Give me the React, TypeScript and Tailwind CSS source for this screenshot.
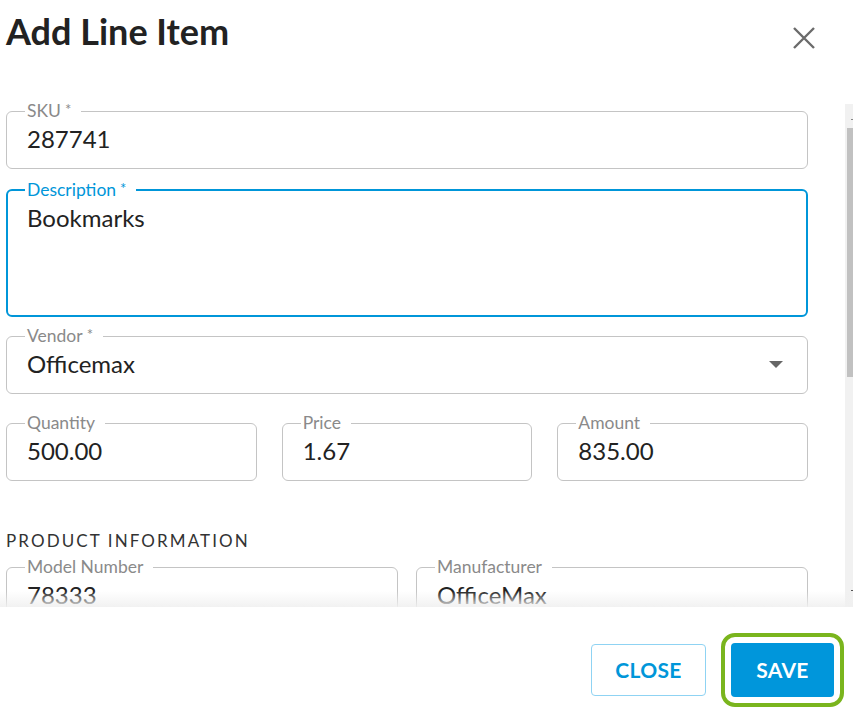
import React from "react";

const font = { fontFamily: "Lato, 'Noto Sans', sans-serif" };

function Field({
  label,
  value,
  required,
  focused,
  select,
  tall,
}: {
  label: string;
  value: string;
  required?: boolean;
  focused?: boolean;
  select?: boolean;
  tall?: boolean;
}) {
  return (
    <div
      className={`relative rounded-[6px] bg-white ${
        focused ? "border-2 border-[#0096d9]" : "border border-[#c4c4c4]"
      } ${tall ? "h-[128px]" : "h-[58px]"}`}
    >
      <span
        className={`absolute top-[-11px] flex items-start bg-white pl-[2px] pr-[10px] text-[17.5px] leading-[20px] ${
          focused ? "left-[17px] text-[#0096d9]" : "left-[18px] text-[#8a8a8a]"
        }`}
      >
        {label}
        {required && <span className="ml-[4px] mt-[1px] text-[15px] leading-[15px]">*</span>}
      </span>
      <div
        className={`flex text-[24px] text-[#222] ${
          tall ? "items-start px-[19px] pt-[9px]" : "h-full items-center px-[20px] pb-[2px]"
        }`}
      >
        <span className="flex-1">{value}</span>
        {select && (
          <svg width="14" height="7" viewBox="0 0 14 7" className="mr-[4px]">
            <path d="M0 0h14L7 7z" fill="#666" />
          </svg>
        )}
      </div>
    </div>
  );
}

export default function App() {
  return (
    <div className="h-[712px] w-[853px] overflow-hidden bg-white" style={font}>
      <div className="flex h-[98px] items-start justify-between">
        <h1 className="ml-[6px] mt-[9px] text-[36px] font-bold leading-[44px] text-[#222]">
          Add Line Item
        </h1>
        <button className="mr-[38px] mt-[27px] p-0">
          <svg width="22" height="22" viewBox="0 0 22 22">
            <path d="M1 1l20 20M21 1L1 21" stroke="#6b6b6b" strokeWidth="2.4" />
          </svg>
        </button>
      </div>

      <div className="relative h-[509px] overflow-hidden">
        <div className="flex w-[808px] flex-col pl-[6px] pt-[13px]">
          <Field label="SKU" value="287741" required />
          <div className="mt-[20px]">
            <Field label="Description" value="Bookmarks" required focused tall />
          </div>
          <div className="mt-[19px]">
            <Field label="Vendor" value="Officemax" required select />
          </div>
          <div className="mt-[29px] grid grid-cols-3 gap-[25px]">
            <Field label="Quantity" value="500.00" />
            <Field label="Price" value="1.67" />
            <Field label="Amount" value="835.00" />
          </div>
          <div className="mt-[50px] text-[17px] leading-[20px] tracking-[2.1px] text-[#333]">
            PRODUCT INFORMATION
          </div>
          <div className="mt-[16px] grid grid-cols-2 gap-[18px]">
            <Field label="Model Number" value="78333" />
            <Field label="Manufacturer" value="OfficeMax" />
          </div>
        </div>

        {/* scrollbar */}
        <div className="absolute bottom-0 right-0 top-[6px] w-[8px] bg-[#f1f1f1]">
          <div className="absolute left-[6px] top-[15px] h-[1px] w-[2px] bg-[#888]" />
          <div className="absolute left-[2px] top-[24px] h-[249px] w-[6px] bg-[#c1c1c1]" />
          <div className="absolute bottom-[16px] left-[6px] h-[1px] w-[2px] bg-[#555]" />
        </div>
        <div className="pointer-events-none absolute bottom-0 left-0 h-[16px] w-full bg-gradient-to-b from-[rgba(245,245,245,0)] to-[rgba(240,240,240,0.9)]" />
      </div>

      <div className="flex h-[105px] items-start justify-end gap-[25px] pr-[19px] pt-[37px]">
        <button className="h-[52px] w-[115px] rounded-[4px] border border-[#8fd3f3] text-[21px] font-bold tracking-[0.3px] text-[#0096d9]">
          CLOSE
        </button>
        <button className="-mt-[1px] h-[54px] w-[103px] rounded-[4px] bg-[#0096db] text-[21px] font-bold tracking-[0.3px] text-white outline-[4px] outline-offset-[6px] outline-[#7ab51d] outline-solid">
          SAVE
        </button>
      </div>
    </div>
  );
}
